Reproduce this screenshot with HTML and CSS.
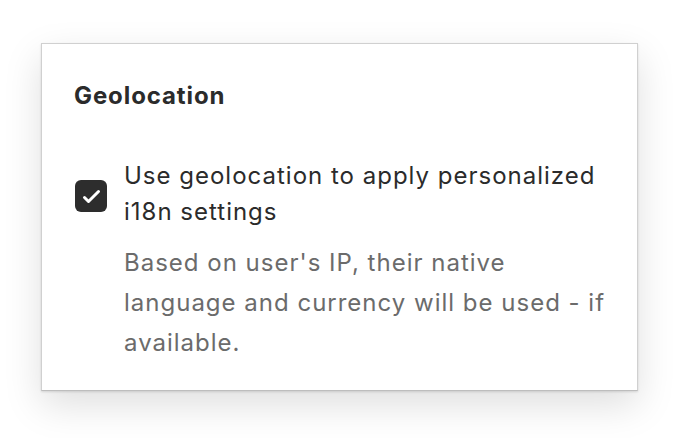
FILE: index.html
```html
<!DOCTYPE html>
<html lang="en">
<head>
  <meta charset="UTF-8" />
  <meta name="viewport" content="width=device-width, initial-scale=1" />
  <title>Geolocation settings</title>
  <link rel="stylesheet" href="styles.css">
</head>
<body>
  <div class="panel">
    <h2 class="panel-title">Geolocation</h2>

    <label class="option">
      <input type="checkbox" class="option-input" checked />
      <span class="option-box" aria-hidden="true">
        <svg viewBox="0 0 32 32" width="32" height="32">
          <path d="M9.5 17.5l4 4 10-10" fill="none" stroke="#fff" stroke-width="3" stroke-linecap="round" stroke-linejoin="round"/>
        </svg>
      </span>
      <span class="option-label">Use geolocation to apply personalized i18n settings</span>
      <span class="option-help">Based on user's IP, their native language and currency will be used - if available.</span>
    </label>
  </div>
</body>
</html>
```

FILE: styles.css
```css
/* Reset */
* {
  margin: 0; padding: 0; box-sizing: border-box;
}
body {
  background: #fff;
  color: #2b2b2b;
  font-family: Inter, "Noto Sans", Arial, sans-serif;
  font-optical-sizing: none;
  letter-spacing: 1px;
  min-height: 100vh;
  padding: 43px 40px 47px 41px;
}
/* Panel */
.panel {
  width: 597px;
  height: 348px;
  background: #fff;
  border: 1px solid #d0d0d0;
  border-bottom-color: #bdbdbd;
  box-shadow: 0 1px 2px rgba(0, 0, 0, 0.12), 0 14px 36px rgba(0, 0, 0, 0.13);
  padding: 38px 22px 38px 32px;
}
.panel-title {
  font-size: 24px;
  font-weight: 700;
  line-height: 28px;
  letter-spacing: 0.9px;
  color: #2b2b2b;
  margin-bottom: 48px;
}
/* Checkbox option */
.option {
  display: grid;
  grid-template-columns: 32px 1fr;
  column-gap: 18px;
  cursor: pointer;
}
.option-input {
  position: absolute;
  opacity: 0;
  pointer-events: none;
}
.option-box {
  width: 32px;
  height: 32px;
  border-radius: 6px;
  background: #2d2d2d;
  display: flex;
  align-items: center;
  justify-content: center;
  align-self: center;
  margin-top: 4px;
  margin-left: 1px;
}
.option-label {
  font-size: 24px;
  line-height: 36px;
  color: #2b2b2b;
}
.option-help {
  grid-column: 2;
  font-size: 24px;
  line-height: 40px;
  color: #6b6b6b;
  margin-top: 13px;
}
```
